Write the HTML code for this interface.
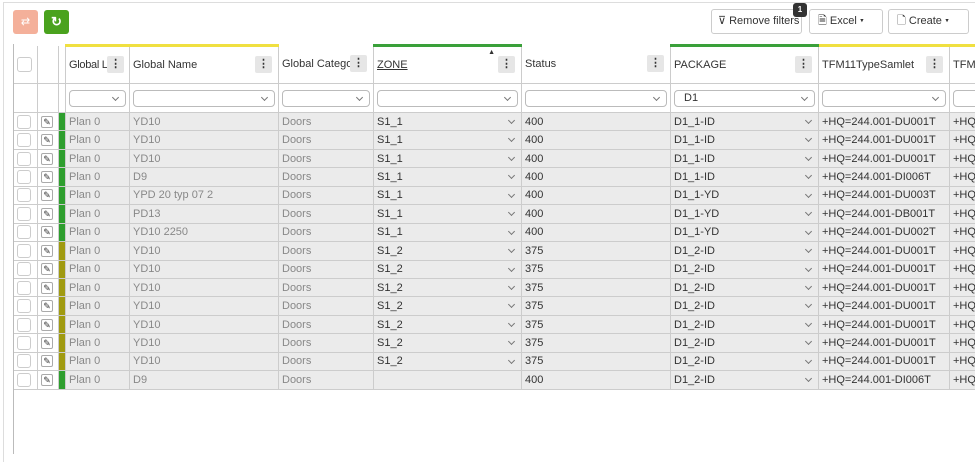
<!DOCTYPE html>
<html><head><meta charset="utf-8"><style>
*{box-sizing:border-box;margin:0;padding:0}
body{width:975px;height:447px;overflow:hidden;background:#fff;font-family:"Liberation Sans",sans-serif;font-size:11px;color:#333;position:relative}
.outer{position:absolute;left:3px;top:2px;width:980px;height:460px;border-left:1px solid #ddd;border-top:1px solid #ddd}
.btn{position:absolute;border-radius:3px}
.tb{position:absolute;top:9px;height:25px;border:1px solid #ccc;border-radius:3px;background:#fff;font-size:11px;line-height:23px;color:#333;padding-left:8px}
.badge{position:absolute;left:793px;top:3px;width:14px;height:14px;background:#333;color:#fff;border-radius:3px;font-size:8px;font-weight:bold;text-align:center;line-height:14px}
.wrap{position:absolute;left:13px;top:44px;width:970px;height:410px;overflow:hidden}
.lb{position:absolute;left:13px;top:44px;width:1px;height:410px;background:#bbb}
table{border-collapse:collapse;table-layout:fixed;width:1010px}
td,th{border:1px solid #ccc;overflow:hidden;white-space:nowrap;font-weight:normal;text-align:left;position:relative;padding:0 3px}
th{height:38px;background:#fff;font-size:11px;color:#333}
th .m{position:absolute;right:6px;top:9px;width:17px;height:17px;background:#e6e6e6;border-radius:2px;text-align:center;font-weight:bold;line-height:17px;font-size:11px}
tr.f td{height:29px;background:#fff}
.sel{height:17px;border:1px solid #bbb;border-radius:4px;margin-top:1px;position:relative;font-size:11px;line-height:15px;padding-left:9px}
.sel:after,.dd:after{content:"";position:absolute;right:7px;top:4px;width:4px;height:4px;border-right:1px solid #777;border-bottom:1px solid #777;transform:rotate(45deg)}
tr.d td{height:18.45px;background:#ebebeb;line-height:16px}
tr.d td.w{background:#fff}
td.g{color:#888}
.dd:after{top:5px}
.cb{display:block;width:14px;height:14px;border:1px solid #ccc;border-radius:3px;margin-left:1px;background:#fff}
.ed{display:block;width:12px;height:12px;border:1px solid #aaa;border-radius:2px;margin-left:0;font-size:9px;line-height:10px;text-align:center;background:#fff}
td.bar{padding:0;border-left:none}
td.bar div{width:7px;height:100%;position:absolute;left:0;top:0}
.gb div{background:#2e9e2e}.ob div{background:#a09a10}
.dl{border-left:1px dashed #bbb!important}
</style></head><body>
<div class="outer"></div>
<div class="btn" style="left:13px;top:10px;width:25px;height:24px;background:#f4b09a;color:#fff;text-align:center;line-height:24px;font-size:11px">⇄</div>
<div class="btn" style="left:44px;top:10px;width:25px;height:24px;background:#4aa21e;color:#fff;text-align:center;line-height:24px;font-size:13px;font-weight:bold">↻</div>
<div class="tb" style="left:711px;width:91px;padding-left:6px">⊽ Remove filters</div>
<div class="badge">1</div>
<div class="tb" style="left:809px;width:74px">🗎 Excel ▾</div>
<div class="tb" style="left:888px;width:81px">🗋 Create ▾</div>
<div class="wrap"><table style="margin-left:-1px">
<colgroup><col style="width:25px"><col style="width:21px"><col style="width:7px"><col style="width:64px"><col style="width:149px"><col style="width:95px"><col style="width:148px"><col style="width:149px"><col style="width:148px"><col style="width:131px"><col style="width:74px"></colgroup>
<tr><th style="border-top:none"><span class="cb" style="width:15px;height:15px"></span></th><th style="border-top:none"></th><th style="border-top:none;border-left:none"></th>
<th class="dl" style="border-top:3px solid #f0e040;letter-spacing:-0.3px">Global L<span class="m" style="right:5px">⋮</span></th>
<th style="border-top:3px solid #f0e040">Global Name<span class="m">⋮</span></th>
<th style="border-top:none">Global Categor<span class="m">⋮</span></th>
<th style="border-top:3px solid #3aa03a"><u>ZONE</u><span style="position:absolute;right:26px;top:2px;font-size:7px">▲</span><span class="m">⋮</span></th>
<th style="border-top:none">Status<span class="m">⋮</span></th>
<th style="border-top:3px solid #3aa03a">PACKAGE<span class="m">⋮</span></th>
<th style="border-top:3px solid #f0e040">TFM11TypeSamlet<span class="m">⋮</span></th>
<th style="border-top:3px solid #f0e040">TFM</th></tr>
<tr class="f"><td></td><td></td><td style="border-left:none"></td><td class="dl"><div class="sel"></div></td><td><div class="sel"></div></td><td><div class="sel"></div></td><td><div class="sel"></div></td><td><div class="sel"></div></td><td><div class="sel">D1</div></td><td><div class="sel"></div></td><td><div class="sel"></div></td></tr>
<tr class="d"><td class="w"><span class="cb"></span></td><td class="w"><span class="ed">✎</span></td><td class="bar gb"><div></div></td><td class="g dl">Plan 0</td><td class="g">YD10</td><td class="g">Doors</td><td class="dd">S1_1</td><td>400</td><td class="dd">D1_1-ID</td><td>+HQ=244.001-DU001T</td><td>+HQ</td></tr>
<tr class="d"><td class="w"><span class="cb"></span></td><td class="w"><span class="ed">✎</span></td><td class="bar gb"><div></div></td><td class="g dl">Plan 0</td><td class="g">YD10</td><td class="g">Doors</td><td class="dd">S1_1</td><td>400</td><td class="dd">D1_1-ID</td><td>+HQ=244.001-DU001T</td><td>+HQ</td></tr>
<tr class="d"><td class="w"><span class="cb"></span></td><td class="w"><span class="ed">✎</span></td><td class="bar gb"><div></div></td><td class="g dl">Plan 0</td><td class="g">YD10</td><td class="g">Doors</td><td class="dd">S1_1</td><td>400</td><td class="dd">D1_1-ID</td><td>+HQ=244.001-DU001T</td><td>+HQ</td></tr>
<tr class="d"><td class="w"><span class="cb"></span></td><td class="w"><span class="ed">✎</span></td><td class="bar gb"><div></div></td><td class="g dl">Plan 0</td><td class="g">D9</td><td class="g">Doors</td><td class="dd">S1_1</td><td>400</td><td class="dd">D1_1-ID</td><td>+HQ=244.001-DI006T</td><td>+HQ</td></tr>
<tr class="d"><td class="w"><span class="cb"></span></td><td class="w"><span class="ed">✎</span></td><td class="bar gb"><div></div></td><td class="g dl">Plan 0</td><td class="g">YPD 20 typ 07 2</td><td class="g">Doors</td><td class="dd">S1_1</td><td>400</td><td class="dd">D1_1-YD</td><td>+HQ=244.001-DU003T</td><td>+HQ</td></tr>
<tr class="d"><td class="w"><span class="cb"></span></td><td class="w"><span class="ed">✎</span></td><td class="bar gb"><div></div></td><td class="g dl">Plan 0</td><td class="g">PD13</td><td class="g">Doors</td><td class="dd">S1_1</td><td>400</td><td class="dd">D1_1-YD</td><td>+HQ=244.001-DB001T</td><td>+HQ</td></tr>
<tr class="d"><td class="w"><span class="cb"></span></td><td class="w"><span class="ed">✎</span></td><td class="bar gb"><div></div></td><td class="g dl">Plan 0</td><td class="g">YD10 2250</td><td class="g">Doors</td><td class="dd">S1_1</td><td>400</td><td class="dd">D1_1-YD</td><td>+HQ=244.001-DU002T</td><td>+HQ</td></tr>
<tr class="d"><td class="w"><span class="cb"></span></td><td class="w"><span class="ed">✎</span></td><td class="bar ob"><div></div></td><td class="g dl">Plan 0</td><td class="g">YD10</td><td class="g">Doors</td><td class="dd">S1_2</td><td>375</td><td class="dd">D1_2-ID</td><td>+HQ=244.001-DU001T</td><td>+HQ</td></tr>
<tr class="d"><td class="w"><span class="cb"></span></td><td class="w"><span class="ed">✎</span></td><td class="bar ob"><div></div></td><td class="g dl">Plan 0</td><td class="g">YD10</td><td class="g">Doors</td><td class="dd">S1_2</td><td>375</td><td class="dd">D1_2-ID</td><td>+HQ=244.001-DU001T</td><td>+HQ</td></tr>
<tr class="d"><td class="w"><span class="cb"></span></td><td class="w"><span class="ed">✎</span></td><td class="bar ob"><div></div></td><td class="g dl">Plan 0</td><td class="g">YD10</td><td class="g">Doors</td><td class="dd">S1_2</td><td>375</td><td class="dd">D1_2-ID</td><td>+HQ=244.001-DU001T</td><td>+HQ</td></tr>
<tr class="d"><td class="w"><span class="cb"></span></td><td class="w"><span class="ed">✎</span></td><td class="bar ob"><div></div></td><td class="g dl">Plan 0</td><td class="g">YD10</td><td class="g">Doors</td><td class="dd">S1_2</td><td>375</td><td class="dd">D1_2-ID</td><td>+HQ=244.001-DU001T</td><td>+HQ</td></tr>
<tr class="d"><td class="w"><span class="cb"></span></td><td class="w"><span class="ed">✎</span></td><td class="bar ob"><div></div></td><td class="g dl">Plan 0</td><td class="g">YD10</td><td class="g">Doors</td><td class="dd">S1_2</td><td>375</td><td class="dd">D1_2-ID</td><td>+HQ=244.001-DU001T</td><td>+HQ</td></tr>
<tr class="d"><td class="w"><span class="cb"></span></td><td class="w"><span class="ed">✎</span></td><td class="bar ob"><div></div></td><td class="g dl">Plan 0</td><td class="g">YD10</td><td class="g">Doors</td><td class="dd">S1_2</td><td>375</td><td class="dd">D1_2-ID</td><td>+HQ=244.001-DU001T</td><td>+HQ</td></tr>
<tr class="d"><td class="w"><span class="cb"></span></td><td class="w"><span class="ed">✎</span></td><td class="bar ob"><div></div></td><td class="g dl">Plan 0</td><td class="g">YD10</td><td class="g">Doors</td><td class="dd">S1_2</td><td>375</td><td class="dd">D1_2-ID</td><td>+HQ=244.001-DU001T</td><td>+HQ</td></tr>
<tr class="d"><td class="w"><span class="cb"></span></td><td class="w"><span class="ed">✎</span></td><td class="bar gb"><div></div></td><td class="g dl">Plan 0</td><td class="g">D9</td><td class="g">Doors</td><td></td><td>400</td><td class="dd">D1_2-ID</td><td>+HQ=244.001-DI006T</td><td>+HQ</td></tr>
</table></div>
<div class="lb"></div>
</body></html>
